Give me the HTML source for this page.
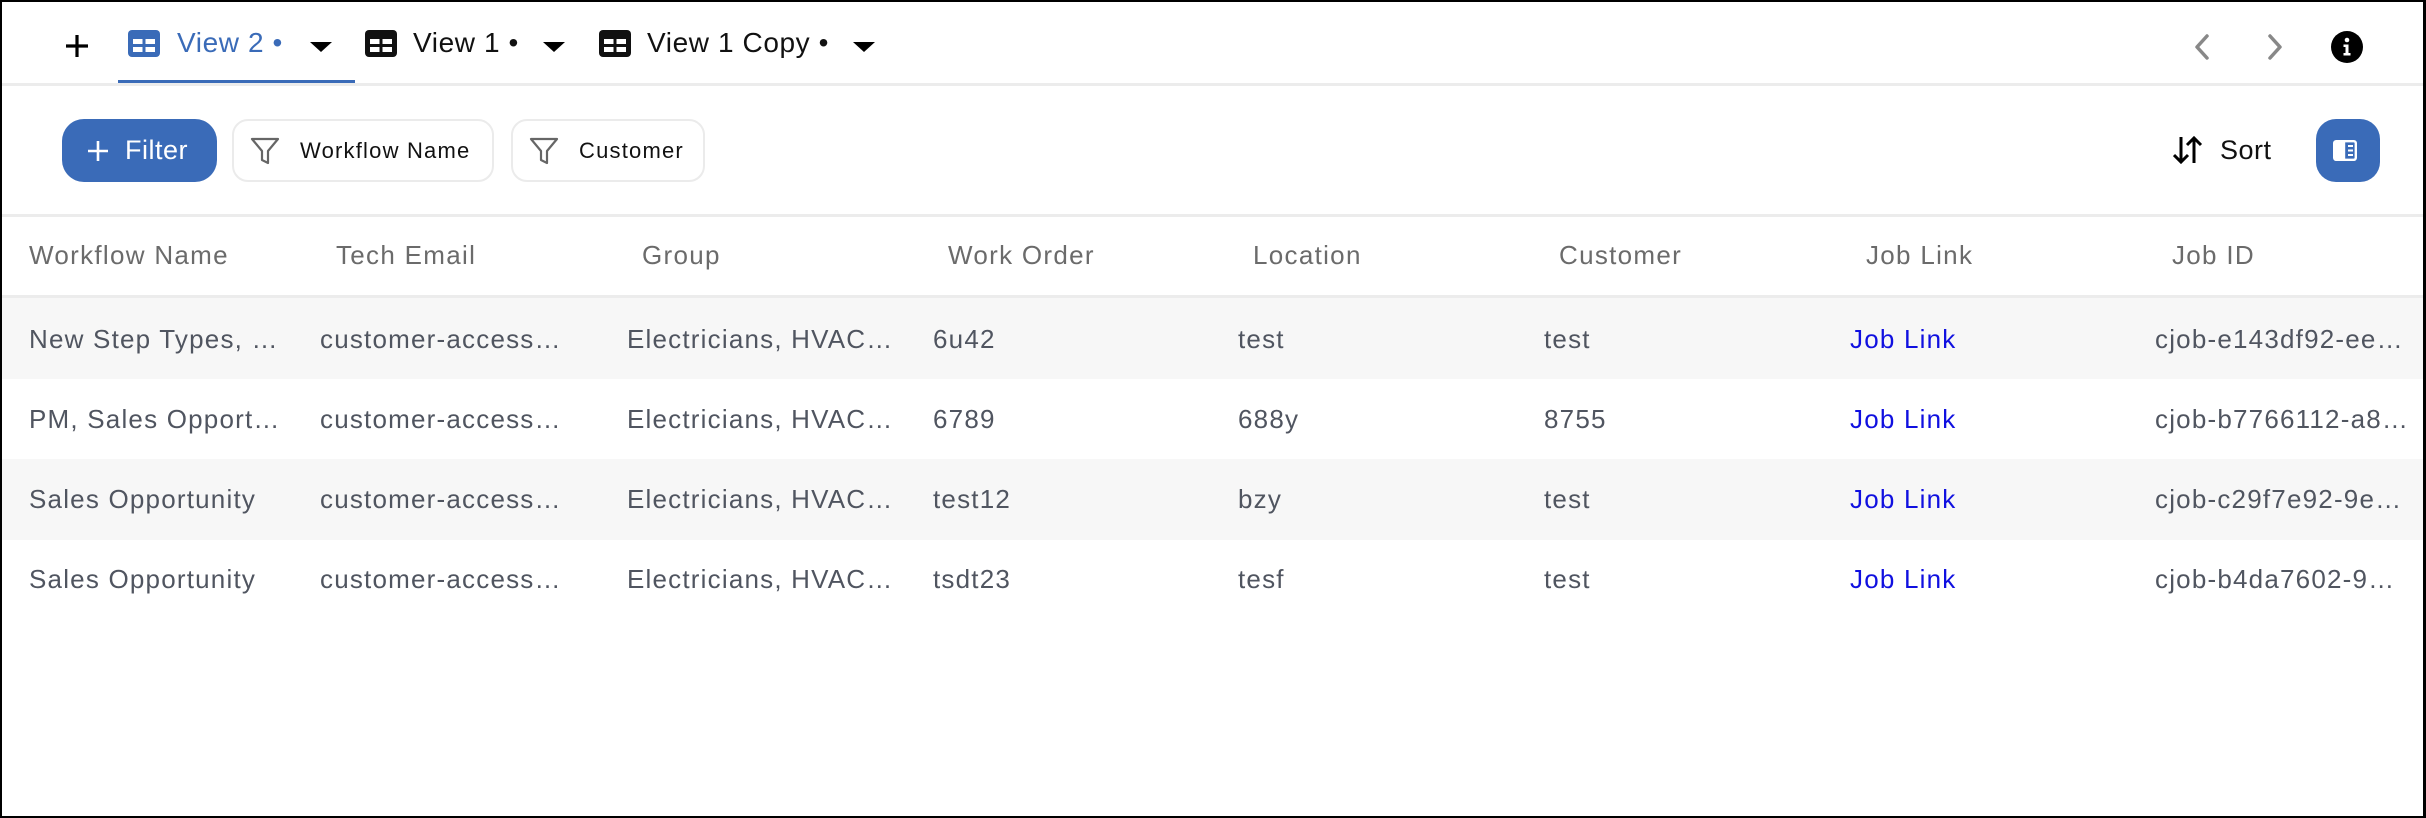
<!DOCTYPE html>
<html><head><meta charset="utf-8"><style>
*{margin:0;padding:0;box-sizing:border-box}
body{width:2426px;height:818px;overflow:hidden;background:#fff;font-family:"Liberation Sans",Arial,sans-serif;position:relative}
.frame{position:absolute;left:0;top:0;width:2426px;height:818px;border:2px solid #000;border-right-width:3px}
.a{position:absolute;white-space:nowrap}
.tab{font-size:28px;top:26px;line-height:34px;letter-spacing:0.6px}
.hl{position:absolute;left:2px;right:3px;height:3px;background:#ececec}
.chip{position:absolute;top:119px;height:63px;border:2px solid #ebebeb;border-radius:16px;font-size:22px;letter-spacing:1.2px;color:#111;display:flex;align-items:center}
.th{font-size:26px;color:#6b6b6b;top:238px;line-height:34px;letter-spacing:1.3px}
.row{position:absolute;left:2px;right:3px;height:81px}
.td{font-size:26px;color:#505560;line-height:34px;letter-spacing:1.2px}
.lk{color:#1010e0}
</style></head><body>
<div class="frame"></div>
<!-- tabs -->
<svg class="a" style="left:64px;top:33px" width="26" height="26" viewBox="0 0 26 26"><path d="M13 2V24M2 13H24" stroke="#000" stroke-width="3.2"/></svg>
<svg class="a" style="left:128px;top:30px" width="32" height="27" viewBox="0 0 32 27"><rect width="32" height="27" rx="4" fill="#3a6bb8"/><rect x="5" y="9" width="9.5" height="5" fill="#fff"/><rect x="17.5" y="9" width="9.5" height="5" fill="#fff"/><rect x="5" y="17" width="9.5" height="5" fill="#fff"/><rect x="17.5" y="17" width="9.5" height="5" fill="#fff"/></svg>
<div class="a tab" style="left:177px;color:#3a6bb8">View 2 •</div>
<svg class="a" style="left:310px;top:42px" width="22" height="10"><path d="M0 0H22L11 10Z" fill="#000"/></svg>
<svg class="a" style="left:365px;top:30px" width="32" height="27" viewBox="0 0 32 27"><rect width="32" height="27" rx="4" fill="#111"/><rect x="5" y="9" width="9.5" height="5" fill="#fff"/><rect x="17.5" y="9" width="9.5" height="5" fill="#fff"/><rect x="5" y="17" width="9.5" height="5" fill="#fff"/><rect x="17.5" y="17" width="9.5" height="5" fill="#fff"/></svg>
<div class="a tab" style="left:413px;color:#111">View 1 •</div>
<svg class="a" style="left:543px;top:42px" width="22" height="10"><path d="M0 0H22L11 10Z" fill="#000"/></svg>
<svg class="a" style="left:599px;top:30px" width="32" height="27" viewBox="0 0 32 27"><rect width="32" height="27" rx="4" fill="#111"/><rect x="5" y="9" width="9.5" height="5" fill="#fff"/><rect x="17.5" y="9" width="9.5" height="5" fill="#fff"/><rect x="5" y="17" width="9.5" height="5" fill="#fff"/><rect x="17.5" y="17" width="9.5" height="5" fill="#fff"/></svg>
<div class="a tab" style="left:647px;color:#111">View 1 Copy •</div>
<svg class="a" style="left:853px;top:42px" width="22" height="10"><path d="M0 0H22L11 10Z" fill="#000"/></svg>
<div class="a" style="left:118px;top:80px;width:237px;height:4px;background:#3a6bb8"></div>
<svg class="a" style="left:2193px;top:33px" width="18" height="28"><path d="M14 3L4 14L14 25" stroke="#888" stroke-width="3.5" fill="none" stroke-linecap="round" stroke-linejoin="round"/></svg>
<svg class="a" style="left:2266px;top:33px" width="18" height="28"><path d="M4 3L14 14L4 25" stroke="#888" stroke-width="3.5" fill="none" stroke-linecap="round" stroke-linejoin="round"/></svg>
<svg class="a" style="left:2331px;top:31px" width="32" height="32" viewBox="0 0 32 32"><circle cx="16" cy="16" r="16" fill="#000"/><circle cx="16" cy="9" r="2.3" fill="#fff"/><path d="M12.5 13.5H17.5V22H19.5V24.5H12.5V22H14.5V16H12.5Z" fill="#fff"/></svg>
<div class="hl" style="top:83px"></div>
<!-- filters -->
<div class="a" style="left:62px;top:119px;width:155px;height:63px;border-radius:22px;background:#3a6bb8;color:#fff;font-size:27px;display:flex;align-items:center;letter-spacing:0.5px">
<svg style="margin-left:26px;margin-right:17px" width="20" height="20"><path d="M10 0V20M0 10H20" stroke="#fff" stroke-width="2.6"/></svg>Filter</div>
<div class="chip" style="left:232px;width:262px"><svg style="margin-left:16px;margin-right:20px" width="30" height="30" viewBox="0 0 30 30"><path d="M2 3H28L18 15V27L12 24V15Z" fill="none" stroke="#666" stroke-width="2.2" stroke-linejoin="round"/></svg>Workflow Name</div>
<div class="chip" style="left:511px;width:194px"><svg style="margin-left:16px;margin-right:20px" width="30" height="30" viewBox="0 0 30 30"><path d="M2 3H28L18 15V27L12 24V15Z" fill="none" stroke="#666" stroke-width="2.2" stroke-linejoin="round"/></svg>Customer</div>
<svg class="a" style="left:2173px;top:136px" width="30" height="28" viewBox="0 0 30 28"><path d="M8 1V26M1 19L8 26L15 19M21 27V2M14 9L21 2L28 9" stroke="#000" stroke-width="3" fill="none"/></svg>
<div class="a" style="left:2220px;top:133px;font-size:27px;line-height:34px;color:#111;letter-spacing:0.5px">Sort</div>
<div class="a" style="left:2316px;top:119px;width:64px;height:63px;border-radius:20px;background:#3a6bb8"></div>
<svg class="a" style="left:2333px;top:140px" width="24" height="21" viewBox="0 0 24 21"><rect x="1.2" y="1.2" width="21.6" height="18.6" rx="2" fill="none" stroke="#fff" stroke-width="2.4"/><rect x="1.2" y="1.2" width="11" height="18.6" fill="#fff"/><path d="M15 6H20M15 10.5H20M15 15H20" stroke="#fff" stroke-width="2"/></svg>
<div class="hl" style="top:214px"></div>
<!-- header -->
<div class="a th" style="left:29px">Workflow Name</div>
<div class="a th" style="left:336px">Tech Email</div>
<div class="a th" style="left:642px">Group</div>
<div class="a th" style="left:948px">Work Order</div>
<div class="a th" style="left:1253px">Location</div>
<div class="a th" style="left:1559px">Customer</div>
<div class="a th" style="left:1866px">Job Link</div>
<div class="a th" style="left:2172px">Job ID</div>
<div class="hl" style="top:295px"></div>
<!-- rows -->
<div class="row" style="top:298px;background:#f7f7f7"></div>
<div class="row" style="top:459px;background:#f7f7f7"></div>
<div class="a td" style="left:29px;top:322px">New Step Types, …</div>
<div class="a td" style="left:320px;top:322px">customer-access…</div>
<div class="a td" style="left:627px;top:322px">Electricians, HVAC…</div>
<div class="a td" style="left:933px;top:322px">6u42</div>
<div class="a td" style="left:1238px;top:322px">test</div>
<div class="a td" style="left:1544px;top:322px">test</div>
<div class="a td lk" style="left:1850px;top:322px">Job Link</div>
<div class="a td" style="left:2155px;top:322px">cjob-e143df92-ee…</div>

<div class="a td" style="left:29px;top:402px">PM, Sales Opport…</div>
<div class="a td" style="left:320px;top:402px">customer-access…</div>
<div class="a td" style="left:627px;top:402px">Electricians, HVAC…</div>
<div class="a td" style="left:933px;top:402px">6789</div>
<div class="a td" style="left:1238px;top:402px">688y</div>
<div class="a td" style="left:1544px;top:402px">8755</div>
<div class="a td lk" style="left:1850px;top:402px">Job Link</div>
<div class="a td" style="left:2155px;top:402px">cjob-b7766112-a8…</div>

<div class="a td" style="left:29px;top:482px">Sales Opportunity</div>
<div class="a td" style="left:320px;top:482px">customer-access…</div>
<div class="a td" style="left:627px;top:482px">Electricians, HVAC…</div>
<div class="a td" style="left:933px;top:482px">test12</div>
<div class="a td" style="left:1238px;top:482px">bzy</div>
<div class="a td" style="left:1544px;top:482px">test</div>
<div class="a td lk" style="left:1850px;top:482px">Job Link</div>
<div class="a td" style="left:2155px;top:482px">cjob-c29f7e92-9e…</div>

<div class="a td" style="left:29px;top:562px">Sales Opportunity</div>
<div class="a td" style="left:320px;top:562px">customer-access…</div>
<div class="a td" style="left:627px;top:562px">Electricians, HVAC…</div>
<div class="a td" style="left:933px;top:562px">tsdt23</div>
<div class="a td" style="left:1238px;top:562px">tesf</div>
<div class="a td" style="left:1544px;top:562px">test</div>
<div class="a td lk" style="left:1850px;top:562px">Job Link</div>
<div class="a td" style="left:2155px;top:562px">cjob-b4da7602-9…</div>
</body></html>
